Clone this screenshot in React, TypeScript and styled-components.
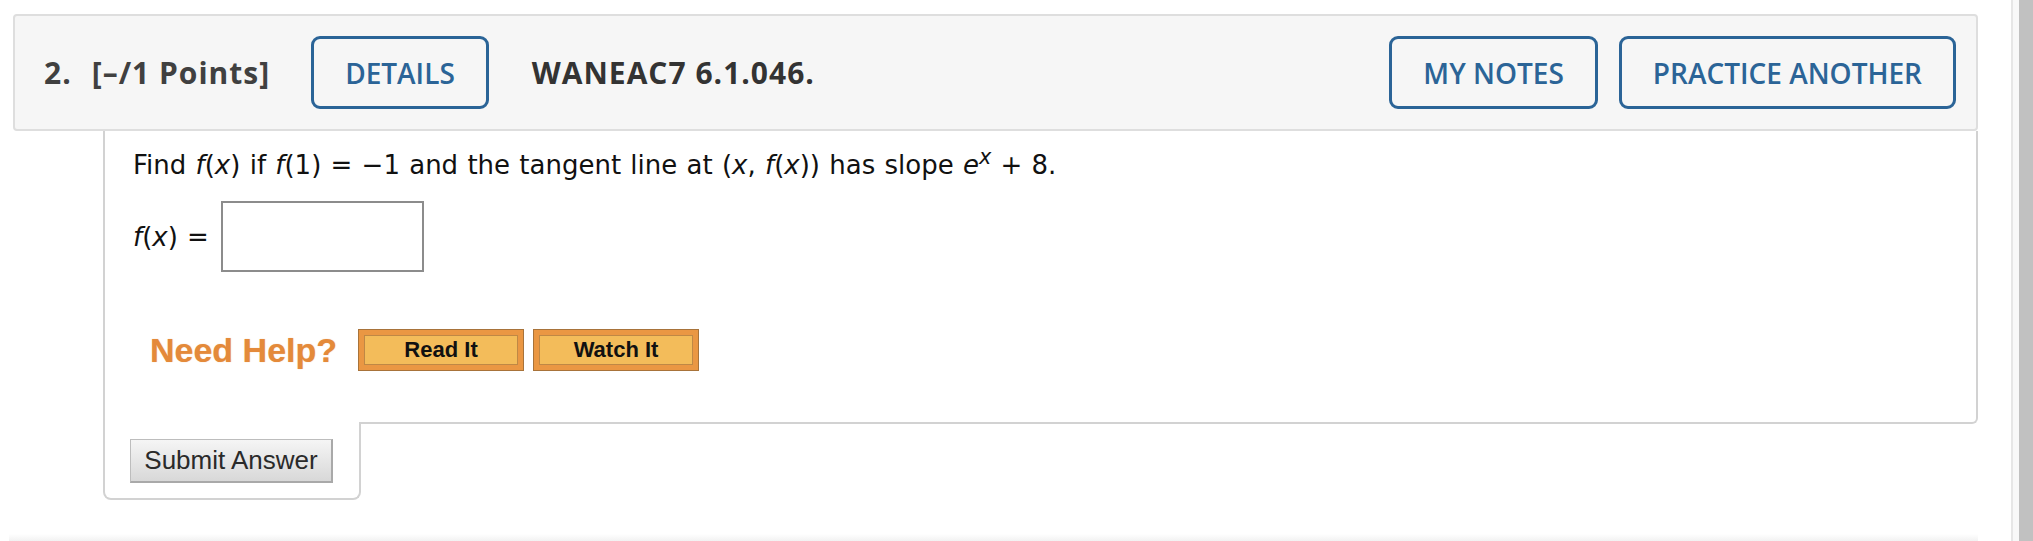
import styled, { createGlobalStyle } from "styled-components"

const GlobalStyle = createGlobalStyle`
  html, body {
    margin: 0;
    padding: 0;
    background: #ffffff;
    overflow: hidden;
  }
`

const Page = styled.div`
  display: flex;
  width: 2033px;
  height: 541px;
  overflow: hidden;
`

const Main = styled.div`
  flex: 1;
  padding: 14px 33px 0 13px;
`

const ScrollTrack = styled.div`
  width: 14px;
  border-left: 2px solid #e6e6e6;
  padding-left: 6px;
  background: #f8f8f8;
  display: flex;
`

const ScrollThumb = styled.div`
  flex: 1;
  background: #c1c1c1;
`

const Header = styled.div`
  height: 113px;
  border: 2px solid #dedede;
  border-radius: 4px;
  background: #f6f6f6;
  display: flex;
  align-items: center;
  padding: 0 20px 0 29px;
  font-family: "Open Sans", "DejaVu Sans", sans-serif;
  color: #404040;
`

const HeadText = styled.span<{ $gap?: number }>`
  font-size: 30px;
  font-weight: 700;
  letter-spacing: 1px;
  margin-right: ${({ $gap }) => $gap ?? 0}px;
`

const Title = styled.span`
  font-size: 30px;
  font-weight: 700;
  letter-spacing: 1px;
  color: #333333;
  margin-left: 43px;
`

const OutlineButton = styled.button`
  height: 73px;
  padding: 0 31px;
  border: 3px solid #2b6497;
  border-radius: 9px;
  background: transparent;
  color: #2b6497;
  font-family: "Open Sans", "DejaVu Sans", sans-serif;
  font-size: 28px;
  font-weight: 600;
  cursor: pointer;
`

const RightButtons = styled.div`
  margin-left: auto;
  display: flex;
  gap: 21px;
`

const Body = styled.div`
  margin-left: 90px;
  border: 2px solid #d2d2d2;
  border-top: none;
  border-bottom-right-radius: 6px;
  padding: 16px 28px 51px 28px;
  font-family: "DejaVu Sans", Verdana, sans-serif;
  font-size: 26px;
  line-height: 36px;
  word-spacing: 1px;
  color: #111111;
`

const Sentence = styled.div``

const Sup = styled.sup`
  font-size: 0.8em;
  line-height: 0;
`

const AnswerRow = styled.div`
  display: flex;
  align-items: center;
  gap: 12px;
  margin-top: 18px;
`

const AnswerInput = styled.input`
  box-sizing: content-box;
  width: 199px;
  height: 67px;
  border: 2px solid #8c8c8c;
  padding: 0;
`

const HelpRow = styled.div`
  display: flex;
  align-items: center;
  margin-top: 57px;
  margin-left: 17px;
`

const NeedHelp = styled.span`
  font-family: "Liberation Sans", Arial, sans-serif;
  font-size: 34px;
  font-weight: 700;
  line-height: 42px;
  word-spacing: 0;
  color: #e48a3a;
  margin-right: 21px;
  text-shadow: 0 0 1px rgba(228, 138, 58, 0.6);
`

const HelpButton = styled.button<{ $last?: boolean }>`
  width: 166px;
  height: 42px;
  margin-right: ${({ $last }) => ($last ? "0" : "9px")};
  border: 1px solid #a8733a;
  background: #f3bc5a;
  box-shadow: inset 0 0 0 5px #ea9743, inset 0 0 0 6px #bf8845;
  font-family: "Liberation Sans", Arial, sans-serif;
  font-size: 22px;
  font-weight: 700;
  color: #111111;
  padding: 0;
  cursor: pointer;
`

const SubmitTab = styled.div`
  position: relative;
  margin-left: 90px;
  margin-top: -2px;
  box-sizing: border-box;
  width: 258px;
  background: #ffffff;
  border: 2px solid #d2d2d2;
  border-top: none;
  border-radius: 0 0 8px 8px;
  padding: 17px 0 15px 25px;
`

const SubmitButton = styled.button`
  width: 203px;
  height: 44px;
  border: 1px solid #bdbdbd;
  border-right: 2px solid #a9a9a9;
  border-bottom: 2px solid #a9a9a9;
  background: linear-gradient(#f5f5f5, #d8d8d8);
  font-family: "Liberation Sans", Arial, sans-serif;
  font-size: 26px;
  color: #2a2a2a;
  padding: 0;
  display: block;
  cursor: pointer;
`

const NextEdge = styled.div`
  margin: 34px 0 0 -4px;
  height: 10px;
  background: linear-gradient(#ffffff, #ececec);
`

export default function App() {
  return (
    <Page>
      <GlobalStyle />
      <Main>
        <Header>
          <HeadText $gap={20}>2.</HeadText>
          <HeadText $gap={41}>[–/1 Points]</HeadText>
          <OutlineButton>DETAILS</OutlineButton>
          <Title>WANEAC7 6.1.046.</Title>
          <RightButtons>
            <OutlineButton>MY NOTES</OutlineButton>
            <OutlineButton>PRACTICE ANOTHER</OutlineButton>
          </RightButtons>
        </Header>
        <Body>
          <Sentence>
            Find <i>f</i>(<i>x</i>) if <i>f</i>(1) = −1 and the tangent line at (<i>x</i>,{" "}
            <i>f</i>(<i>x</i>)) has slope <i>e</i>
            <Sup>
              <i>x</i>
            </Sup>{" "}
            + 8.
          </Sentence>
          <AnswerRow>
            <span>
              <i>f</i>(<i>x</i>) =
            </span>
            <AnswerInput type="text" />
          </AnswerRow>
          <HelpRow>
            <NeedHelp>Need Help?</NeedHelp>
            <HelpButton>Read It</HelpButton>
            <HelpButton $last>Watch It</HelpButton>
          </HelpRow>
        </Body>
        <SubmitTab>
          <SubmitButton>Submit Answer</SubmitButton>
        </SubmitTab>
        <NextEdge />
      </Main>
      <ScrollTrack>
        <ScrollThumb />
      </ScrollTrack>
    </Page>
  )
}
